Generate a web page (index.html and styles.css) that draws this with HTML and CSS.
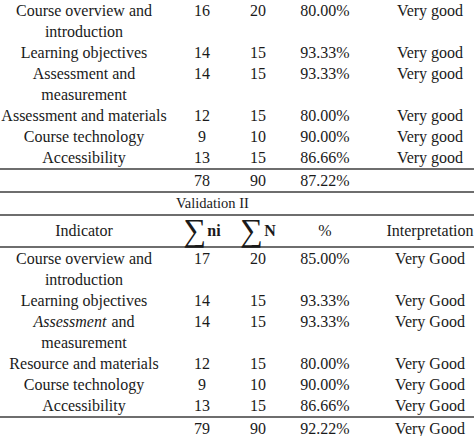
FILE: index.html
```html
<!DOCTYPE html>
<html>
<head>
<meta charset="utf-8">
<link rel="stylesheet" href="styles.css">
</head>
<body>
<table class="tbl">
  <colgroup>
    <col class="c1"><col class="c2"><col class="c3"><col class="c4"><col class="c5">
  </colgroup>
  <tbody>
    <tr><td>Course overview and introduction</td><td>16</td><td>20</td><td>80.00%</td><td>Very good</td></tr>
    <tr><td>Learning objectives</td><td>14</td><td>15</td><td>93.33%</td><td>Very good</td></tr>
    <tr><td>Assessment and measurement</td><td>14</td><td>15</td><td>93.33%</td><td>Very good</td></tr>
    <tr><td class="nowrap">Assessment and materials</td><td>12</td><td>15</td><td>80.00%</td><td>Very good</td></tr>
    <tr><td>Course technology</td><td>9</td><td>10</td><td>90.00%</td><td>Very good</td></tr>
    <tr><td>Accessibility</td><td>13</td><td>15</td><td>86.66%</td><td>Very good</td></tr>
    <tr class="total"><td></td><td>78</td><td>90</td><td>87.22%</td><td></td></tr>
    <tr class="section"><td></td><td colspan="4" class="sec-title">Validation II</td></tr>
    <tr class="head">
      <td>Indicator</td>
      <td><span class="sigma">∑</span><b class="sym">ni</b></td>
      <td><span class="sigma">∑</span><b class="sym">N</b></td>
      <td>%</td>
      <td>Interpretation</td>
    </tr>
    <tr class="first"><td>Course overview and introduction</td><td>17</td><td>20</td><td>85.00%</td><td>Very Good</td></tr>
    <tr><td>Learning objectives</td><td>14</td><td>15</td><td>93.33%</td><td>Very Good</td></tr>
    <tr><td><i class="em">Assessment</i> and measurement</td><td>14</td><td>15</td><td>93.33%</td><td>Very Good</td></tr>
    <tr><td class="nowrap">Resource and materials</td><td>12</td><td>15</td><td>80.00%</td><td>Very Good</td></tr>
    <tr><td>Course technology</td><td>9</td><td>10</td><td>90.00%</td><td>Very Good</td></tr>
    <tr><td>Accessibility</td><td>13</td><td>15</td><td>86.66%</td><td>Very Good</td></tr>
    <tr class="total"><td></td><td>79</td><td>90</td><td>92.22%</td><td>Very Good</td></tr>
  </tbody>
</table>
</body>
</html>
```
FILE: styles.css
```css
html, body {
  margin: 0;
  padding: 0;
  background: #ffffff;
  overflow: hidden;
}
body {
  width: 474px;
  height: 436px;
  font-family: "Liberation Serif", "Times New Roman", serif;
  font-size: 16px;
  color: #1a1a1a;
}
.tbl {
  border-collapse: collapse;
  table-layout: fixed;
  width: 490px;
  font-family: "Liberation Serif", "Times New Roman", serif;
  font-size: 16px;
}
.c1 { width: 168px; }
.c2 { width: 68px; }
.c3 { width: 44px; }
.c4 { width: 90px; }
.c5 { width: 120px; }
.tbl td {
  padding: 0;
  text-align: center;
  vertical-align: top;
  line-height: 21px;
  height: 21px;
}
.tbl td:first-child {
  padding: 0 12px;
}
.tbl td.nowrap {
  padding: 0;
  white-space: nowrap;
}
.em {
  padding-right: 1px;
}
.total td {
  border-top: 2px solid #6e6e6e;
}
.section td {
  border-top: 2px solid #6e6e6e;
  height: 20px;
}
.sec-title {
  text-align: left !important;
  padding-left: 8px !important;
  font-size: 14.5px;
}
.head td {
  border-top: 2px solid #6e6e6e;
  border-bottom: 2px solid #6e6e6e;
  height: 30px;
  line-height: 30px;
  vertical-align: middle;
}
.sigma {
  font-size: 32px;
  line-height: 20px;
  vertical-align: -5px;
  font-weight: normal;
}
.sym {
  font-size: 16px;
  margin-left: 1px;
}
```
